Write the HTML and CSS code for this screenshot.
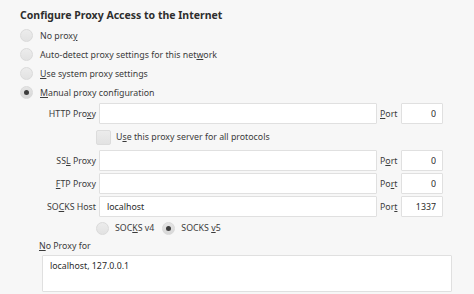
FILE: index.html
```html
<!DOCTYPE html>
<html>
<head>
    <link rel="stylesheet" href="styles.css">
</head>
<body>
    <div class="panel">
        <h1 class="title">Configure Proxy Access to the Internet</h1>

        <div class="mode-list">
            <label class="mode"><input type="radio" name="mode" class="radio"><span>No prox<u>y</u></span></label>
            <label class="mode"><input type="radio" name="mode" class="radio"><span>Auto-detect proxy settings for this net<u>w</u>ork</span></label>
            <label class="mode"><input type="radio" name="mode" class="radio"><span><u>U</u>se system proxy settings</span></label>
            <label class="mode"><input type="radio" name="mode" class="radio" checked><span><u>M</u>anual proxy configuration</span></label>
        </div>

        <div class="manual-grid">
            <label class="field-label">HTTP Pro<u>x</u>y</label>
            <input class="text-field" type="text" value="">
            <label class="port-label"><u>P</u>ort</label>
            <input class="port-field" type="text" value="0">

            <label class="share-row"><input type="checkbox" class="check"><span>U<u>s</u>e this proxy server for all protocols</span></label>

            <label class="field-label">SS<u>L</u> Proxy</label>
            <input class="text-field" type="text" value="">
            <label class="port-label">P<u>o</u>rt</label>
            <input class="port-field" type="text" value="0">

            <label class="field-label"><u>F</u>TP Proxy</label>
            <input class="text-field" type="text" value="">
            <label class="port-label">Po<u>r</u>t</label>
            <input class="port-field" type="text" value="0">

            <label class="field-label">SO<u>C</u>KS Host</label>
            <input class="text-field" type="text" value="localhost">
            <label class="port-label">Por<u>t</u></label>
            <input class="port-field" type="text" value="1337">

            <div class="socks-row">
                <label class="socks-opt"><input type="radio" name="socks" class="radio"><span>SOC<u>K</u>S v4</span></label>
                <label class="socks-opt"><input type="radio" name="socks" class="radio" checked><span>SOCKS <u>v</u>5</span></label>
            </div>
        </div>

        <div class="no-proxy">
            <label class="no-proxy-label"><u>N</u>o Proxy for</label>
            <textarea class="no-proxy-field">localhost, 127.0.0.1</textarea>
        </div>
    </div>
</body>
</html>
```

FILE: styles.css
```css
body {
    margin: 0;
    background-color: #f7f7f7;
    font-family: 'Noto Sans', sans-serif;
    color: #3b3b3b;
    overflow: hidden;
}

.panel {
    padding: 7px 0 0 20px;
}

.title {
    margin: 0 0 3px 0;
    font-size: 10.5px;
    font-weight: bold;
    color: #2e2e2e;
    line-height: 16px;
}

.mode-list {
    display: flex;
    flex-direction: column;
}

.mode {
    display: flex;
    align-items: center;
    gap: 7px;
    height: 19px;
    font-size: 8.8px;
}

u {
    text-decoration-thickness: 1px;
    text-underline-offset: 1px;
}

.radio {
    appearance: none;
    -webkit-appearance: none;
    margin: 0;
    width: 13px;
    height: 13px;
    border-radius: 50%;
    border: 1px solid #dadada;
    background: linear-gradient(#ececec, #e2e2e2);
    box-sizing: border-box;
    position: relative;
    flex: none;
}

.radio:checked {
    background: linear-gradient(#e4e4e4, #d8d8d8);
}

.radio:checked::after {
    content: '';
    position: absolute;
    left: 3px;
    top: 3px;
    width: 5px;
    height: 5px;
    border-radius: 50%;
    background: #3d3d3d;
}

.manual-grid {
    display: grid;
    grid-template-columns: 76px 278px 18px 42px;
    grid-template-rows: 21px 22px 21px 21px 21px 18px;
    column-gap: 3px;
    row-gap: 2px;
    margin-top: 1px;
    align-items: center;
    font-size: 8.8px;
}

.field-label {
    text-align: right;
    white-space: nowrap;
}

.port-label {
    white-space: nowrap;
}

.text-field,
.port-field,
.no-proxy-field {
    margin: 0;
    height: 21px;
    box-sizing: border-box;
    border: 1px solid #e0e0e0;
    border-radius: 1px;
    background: #fff;
    font-family: 'Noto Sans', sans-serif;
    font-size: 8.8px;
    color: #2b2b2b;
    padding: 0 7px;
    outline: none;
}

.port-field {
    text-align: right;
    padding-right: 6px;
}

.share-row {
    grid-column: 2 / 5;
    display: flex;
    align-items: center;
    gap: 5px;
    margin-left: -3px;
}

.check {
    appearance: none;
    -webkit-appearance: none;
    margin: 0;
    width: 15px;
    height: 15px;
    border: 1px solid #dcdcdc;
    border-radius: 2px;
    background: linear-gradient(#ececec, #e2e2e2);
    box-sizing: border-box;
}

.socks-row {
    grid-column: 2 / 5;
    display: flex;
    align-items: center;
    gap: 8px;
    margin-left: -3px;
}

.socks-opt {
    display: flex;
    align-items: center;
    gap: 6px;
}

.no-proxy {
    margin: 3px 0 0 19px;
    display: flex;
    flex-direction: column;
    gap: 3px;
    font-size: 8.8px;
}

.no-proxy-field {
    margin-left: 3px;
    width: 410px;
    height: 37px;
    padding: 3px 7px;
    resize: none;
    line-height: 14px;
}
```
